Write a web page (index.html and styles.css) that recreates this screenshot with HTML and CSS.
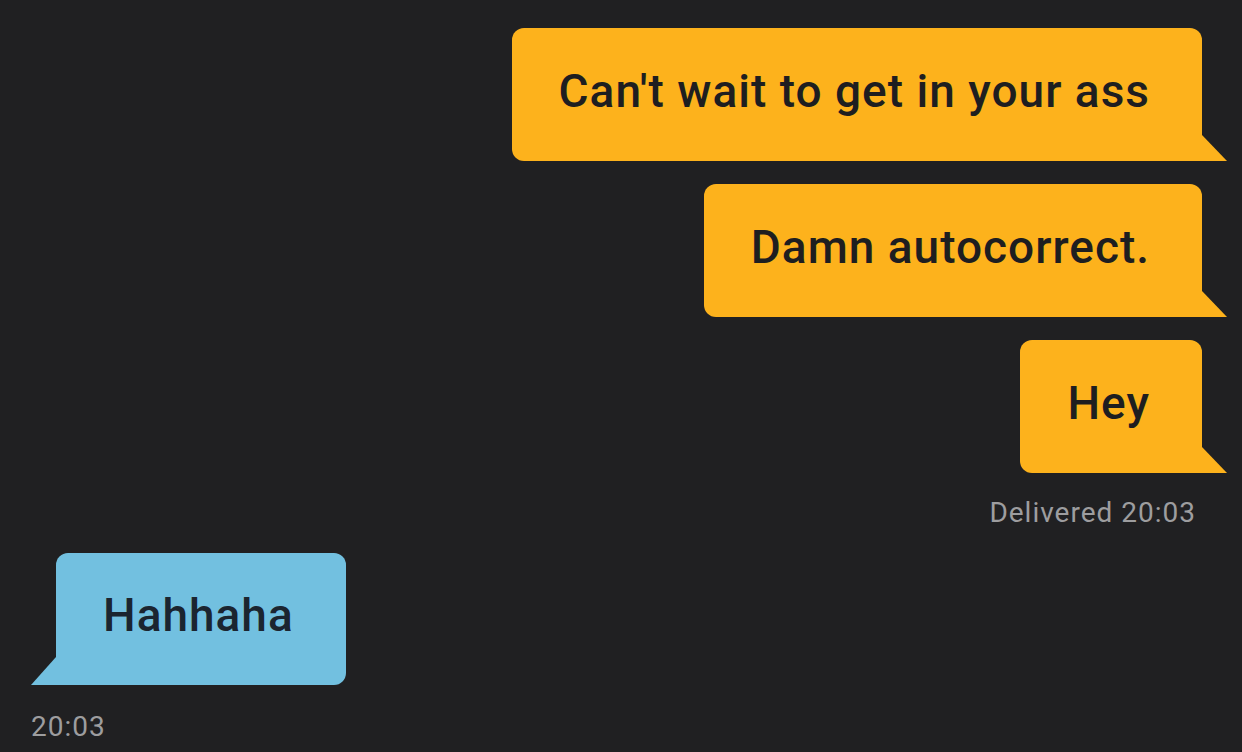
FILE: index.html
```html
<html>

<head>
    <title>Chat</title>
    <link rel="stylesheet" href="styles.css">
</head>

<body>
    <div class="chat">
        <div class="msg out">
            <div class="bubble">Can't wait to get in your ass</div>
        </div>
        <div class="msg out">
            <div class="bubble">Damn autocorrect.</div>
        </div>
        <div class="msg out">
            <div class="bubble">Hey</div>
        </div>
        <div class="status out-status">Delivered 20:03</div>

        <div class="msg in">
            <div class="bubble">Hahhaha</div>
        </div>
        <div class="status in-status">20:03</div>
    </div>
</body>

</html>
```

FILE: styles.css
```css
body {
    margin: 0;
    background-color: #202022;
    font-family: Roboto, "Liberation Sans", sans-serif;
}

.chat {
    display: flex;
    flex-direction: column;
    padding: 28px 40px 0 56px;
}

.msg {
    display: flex;
    margin-bottom: 23px;
}

.msg.out {
    justify-content: flex-end;
}

.msg.in {
    justify-content: flex-start;
}

.bubble {
    position: relative;
    box-sizing: border-box;
    height: 133px;
    display: flex;
    align-items: center;
    padding: 0 52px 8px 47px;
    font-size: 46px;
    font-weight: 500;
    letter-spacing: 1px;
    color: #1e1e20;
    border-radius: 12px;
}

.out .bubble {
    background-color: #fdb21c;
    border-bottom-right-radius: 0;
}

.in .bubble {
    height: 132px;
    background-color: #72c0e0;
    color: #1b2530;
    border-bottom-left-radius: 0;
}

/* tails */
.out .bubble::after {
    content: "";
    position: absolute;
    right: -25px;
    bottom: 0;
    border-left: 25px solid #fdb21c;
    border-top: 26px solid transparent;
}

.in .bubble::after {
    content: "";
    position: absolute;
    left: -25px;
    bottom: 0;
    border-right: 25px solid #72c0e0;
    border-top: 28px solid transparent;
}

.status {
    font-size: 28px;
    color: #9d9d9f;
    letter-spacing: 1px;
}

.out-status {
    align-self: flex-end;
    margin: 0 6px 24px 0;
}

.in-status {
    margin: 2px 0 0 -25px;
}
```
